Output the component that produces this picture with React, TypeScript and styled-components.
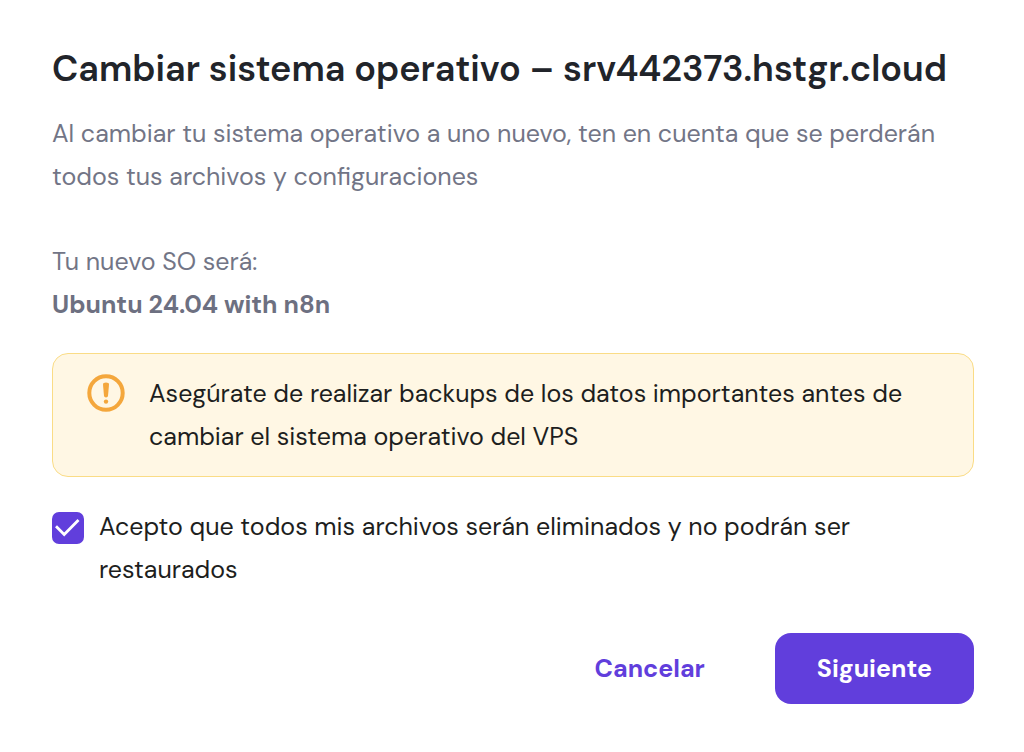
import React, { useState } from "react";
import styled, { createGlobalStyle } from "styled-components";

const GlobalStyle = createGlobalStyle`
  *, *::before, *::after { box-sizing: border-box; }
  body {
    margin: 0;
    background: #ffffff;
    color: #1d1e20;
    font-family: "DM Sans", "Open Sans", "Liberation Sans", sans-serif;
    font-size: 25px;
    line-height: 43px;
  }
`;

const Dialog = styled.main`
  padding: 40px 50px 48px 52px;
`;

const Title = styled.h1`
  margin: 0 0 14px;
  color: #21242a;
  font-size: 36px;
  font-weight: 600;
  line-height: 58px;
`;

const Copy = styled.p`
  margin: 0 0 42px;
  color: #727586;
`;

const System = styled.p`
  margin: 0 0 27px;
  color: #727586;
`;

const SystemName = styled.strong`
  display: block;
  color: #6d7081;
  font-weight: 700;
`;

const Notice = styled.section`
  display: flex;
  gap: 24px;
  margin-bottom: 28px;
  padding: 18px 34px;
  border: 1px solid #fadc86;
  border-radius: 16px;
  background: #fff7e4;
`;

const NoticeIcon = styled.svg`
  flex: none;
  width: 38px;
  height: 38px;
  margin-top: 2px;
`;

const NoticeText = styled.p`
  margin: 0;
`;

const Consent = styled.label`
  display: flex;
  gap: 15px;
  cursor: pointer;
`;

const CheckFrame = styled.span`
  display: grid;
  flex: none;
  width: 32px;
  height: 32px;
  margin-top: 7px;

  > * { grid-area: 1 / 1; }
`;

const Checkbox = styled.input`
  width: 32px;
  height: 32px;
  margin: 0;
  appearance: none;
  border: 2px solid #613edc;
  border-radius: 7px;

  &:checked { background: #613edc; }
  &:checked + svg { visibility: visible; }
`;

const CheckMark = styled.svg`
  width: 32px;
  height: 32px;
  pointer-events: none;
  visibility: hidden;
`;

const Actions = styled.footer`
  display: flex;
  justify-content: flex-end;
  gap: 28px;
  margin-top: 42px;
`;

const Button = styled.button<{ $primary?: boolean }>`
  height: 71px;
  padding: 0 42px;
  border: 0;
  border-radius: 16px;
  background: ${({ $primary }) => ($primary ? "#613edc" : "transparent")};
  color: ${({ $primary }) => ($primary ? "#ffffff" : "#613edc")};
  font: inherit;
  font-weight: 700;
  cursor: pointer;
`;

export default function App() {
  const [accepted, setAccepted] = useState(true);
  return (
    <>
      <GlobalStyle />
      <Dialog>
        <Title>Cambiar sistema operativo – srv442373.hstgr.cloud</Title>
        <Copy>
          Al cambiar tu sistema operativo a uno nuevo, ten en cuenta que se perderán
          todos tus archivos y configuraciones
        </Copy>
        <System>
          Tu nuevo SO será:
          <SystemName>Ubuntu 24.04 with n8n</SystemName>
        </System>
        <Notice>
          <NoticeIcon viewBox="0 0 38 38" fill="none" aria-hidden="true">
            <circle cx="19" cy="19" r="16.7" stroke="#f4a73c" strokeWidth="4" />
            <path d="M16 10.5Q16 8.6 19 8.6T22 10.5L21 22Q20.8 23.4 19 23.4T17 22Z" fill="#f4a73c" />
            <circle cx="19" cy="27.6" r="2.2" fill="#f4a73c" />
          </NoticeIcon>
          <NoticeText>
            Asegúrate de realizar backups de los datos importantes antes de
            cambiar el sistema operativo del VPS
          </NoticeText>
        </Notice>
        <Consent>
          <CheckFrame>
            <Checkbox type="checkbox" checked={accepted} onChange={(e) => setAccepted(e.target.checked)} />
            <CheckMark viewBox="0 0 32 32" fill="none" aria-hidden="true">
              <path d="M4 14.3l8.2 8.2L26.5 8" stroke="#ffffff" strokeWidth="2.8" />
            </CheckMark>
          </CheckFrame>
          <span>
            Acepto que todos mis archivos serán eliminados y no podrán ser restaurados
          </span>
        </Consent>
        <Actions>
          <Button type="button">Cancelar</Button>
          <Button type="button" $primary disabled={!accepted}>Siguiente</Button>
        </Actions>
      </Dialog>
    </>
  );
}
